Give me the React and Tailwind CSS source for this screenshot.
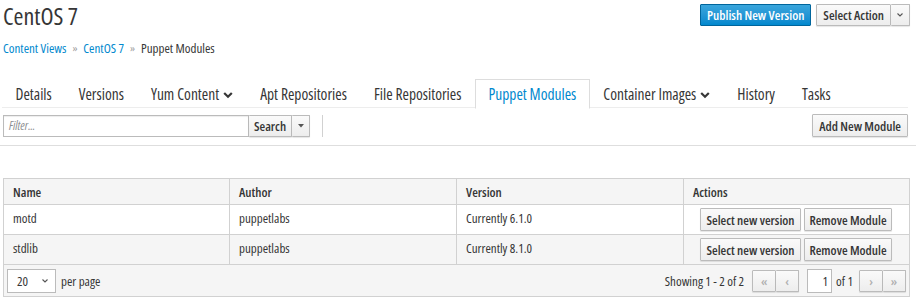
import React from "react";

const font = { fontFamily: '"Open Sans", "Liberation Sans", sans-serif' };

function Chevron({ className = "" }) {
  return (
    <svg className={className} width="10" height="8" viewBox="0 0 10 8">
      <path d="M1.2 2 L5 5.8 L8.8 2" fill="none" stroke="#363636" strokeWidth="2.2" />
    </svg>
  );
}

function SmallDown({ className = "" }) {
  return (
    <svg className={className} width="8" height="6" viewBox="0 0 8 6">
      <path d="M1.5 1.5 L4 4 L6.5 1.5" fill="none" stroke="#555" strokeWidth="1.1" />
    </svg>
  );
}

const btn =
  "border border-[#bbbbbb] bg-gradient-to-b from-[#fafafa] to-[#ededed] text-[#363636] font-semibold text-[13px] leading-[16px] rounded-[1px] shadow-[0_1px_1px_rgba(3,3,3,0.1)] whitespace-nowrap";

export default function App() {
  const tabs = [
    ["Details", false],
    ["Versions", false],
    ["Yum Content", true],
    ["Apt Repositories", false],
    ["File Repositories", false],
    ["Puppet Modules", false, true],
    ["Container Images", true],
    ["History", false],
    ["Tasks", false],
  ];
  const rows = [
    ["motd", "puppetlabs", "Currently 6.1.0"],
    ["stdlib", "puppetlabs", "Currently 8.1.0"],
  ];
  return (
    <div className="w-[916px] h-[300px] bg-white text-[#363636] overflow-hidden font-stretch-[82%]" style={font}>
      {/* header */}
      <div className="flex items-start justify-between pl-[3px] pr-[6px]">
        <h1 className="text-[24px] leading-[28px] mt-[2px] text-[#363636] font-normal">CentOS 7</h1>
        <div className="flex mt-[4px]">
          <button className="h-[22px] px-[6px] text-[13px] leading-[16px] font-semibold text-white bg-gradient-to-b from-[#39a5dc] to-[#0088ce] border border-[#00659c] rounded-[1px] mr-[5px] whitespace-nowrap">
            Publish New Version
          </button>
          <div className="flex">
            <button className={`${btn} h-[22px] px-[6px]`}>Select Action</button>
            <button className={`${btn} h-[22px] w-[19px] border-l-0 flex items-center justify-center`}>
              <SmallDown />
            </button>
          </div>
        </div>
      </div>
      {/* breadcrumb */}
      <div className="flex items-center text-[13px] leading-[16px] mt-[10px] pl-[3px] whitespace-nowrap">
        <span className="text-[#0088ce]">Content Views</span>
        <span className="text-[#9c9c9c] mx-[6px] text-[11px]">»</span>
        <span className="text-[#0088ce]">CentOS 7</span>
        <span className="text-[#9c9c9c] mx-[6px] text-[11px]">»</span>
        <span className="text-[#363636]">Puppet Modules</span>
      </div>
      {/* tabs */}
      <div className="mt-[23px] mr-[8px] ml-[2px] flex border-b border-[#ededed] h-[29px]">
        {tabs.map(([t, dd, active]) => (
          <div
            key={t}
            className={`flex items-center h-[30px] px-[12.5px] text-[15.5px] leading-[18px] whitespace-nowrap ${
              active
                ? "border border-[#dddddd] border-b-white bg-white text-[#0088ce]"
                : "text-[#363636] border border-transparent"
            }`}
          >
            {t}
            {dd && <Chevron className="ml-[4px] mt-[1px]" />}
          </div>
        ))}
      </div>
      {/* toolbar */}
      <div className="flex items-center mt-[6px] pl-[3px] pr-[8px] h-[23px]">
        <div className="flex h-[22px]">
          <div className="w-[246px] border border-[#bbbbbb] flex items-center pl-[5px] text-[12px] italic text-[#8b8d8f] shadow-[inset_0_1px_1px_rgba(3,3,3,0.075)]">
            Filter...
          </div>
          <button className={`${btn} px-[5px] border-l-0 h-[22px]`}>Search</button>
          <button className={`${btn} w-[18px] border-l-0 h-[22px] flex items-center justify-center`}>
            <svg width="6" height="4" viewBox="0 0 6 4">
              <path d="M0 0 L6 0 L3 3.5 Z" fill="#555" />
            </svg>
          </button>
        </div>
        <div className="w-px h-[22px] bg-[#d1d1d1] ml-[12px]" />
        <div className="flex-1" />
        <button className={`${btn} h-[23px] px-[6px]`}>Add New Module</button>
      </div>
      <div className="mt-[8px] border-b border-[#dedede]" />
      {/* table */}
      <div className="mt-[32px] mx-[3px] w-[907px] border border-[#d1d1d1] text-[13px] leading-[16px] whitespace-nowrap">
        <div className="grid grid-cols-[226px_227px_227px_1fr] h-[26px] bg-[#f5f5f5] border-b border-[#d1d1d1] font-semibold">
          {["Name", "Author", "Version", "Actions"].map((h, i) => (
            <div key={h} className={`flex items-center px-[9px] ${i < 3 ? "border-r border-[#d1d1d1]" : ""}`}>
              {h}
            </div>
          ))}
        </div>
        {rows.map((r, ri) => (
          <div
            key={r[0]}
            className={`grid grid-cols-[226px_227px_227px_1fr] h-[30px] border-b border-[#d1d1d1] ${
              ri === 1 ? "bg-[#f5f5f5]" : "bg-white"
            }`}
          >
            {r.map((c) => (
              <div key={c} className="flex items-start pt-[5px] px-[9px] border-r border-[#d1d1d1]">
                {c}
              </div>
            ))}
            <div className="flex items-center pl-[16px] gap-[3px]">
              <button className={`${btn} h-[23px] w-[101px]`}>Select new version</button>
              <button className={`${btn} h-[23px] w-[88px]`}>Remove Module</button>
            </div>
          </div>
        ))}
        <div className="flex items-center h-[31px] bg-[#f5f5f5] px-[3px]">
          <div className="w-[49px] h-[24px] bg-white border border-[#bbbbbb] flex items-center justify-between pl-[9px] pr-[6px]">
            <span>20</span>
            <SmallDown />
          </div>
          <span className="ml-[5px]">per page</span>
          <div className="flex-1" />
          <span className="mr-[8px]">Showing 1 - 2 of 2</span>
          <div className="flex h-[22px]">
            <button className={`${btn} w-[24px] text-[#b0b0b0] font-normal`}>«</button>
            <button className={`${btn} w-[23px] border-l-0 text-[#b0b0b0] font-normal`}>‹</button>
          </div>
          <div className="ml-[8px] w-[25px] h-[24px] bg-white border border-[#bbbbbb] flex items-center justify-end pr-[3px]">
            1
          </div>
          <span className="ml-[4px] mr-[6px]">of 1</span>
          <div className="flex h-[22px]">
            <button className={`${btn} w-[24px] text-[#b0b0b0] font-normal`}>›</button>
            <button className={`${btn} w-[23px] border-l-0 text-[#b0b0b0] font-normal`}>»</button>
          </div>
        </div>
      </div>
    </div>
  );
}
